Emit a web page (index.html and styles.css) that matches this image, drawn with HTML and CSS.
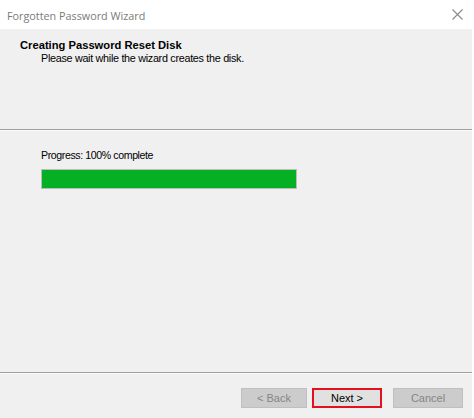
FILE: index.html
```html
<!DOCTYPE html>
<html>
<head>
<meta charset="utf-8">
<link rel="stylesheet" href="styles.css">
</head>
<body>
<div class="window">
  <div class="titlebar">
    <span class="title">Forgotten Password Wizard</span>
    <svg class="close" width="11" height="11" viewBox="0 0 11 11"><path d="M0.5 0.5 L10.5 10.5 M10.5 0.5 L0.5 10.5" stroke="#8a8a8a" stroke-width="1.1" fill="none"/></svg>
  </div>
  <div class="body">
    <div class="header">
      <div class="heading">Creating Password Reset Disk</div>
      <div class="sub">Please wait while the wizard creates the disk.</div>
    </div>
    <div class="sep"></div>
    <div class="content">
      <div class="label">Progress: 100% complete</div>
      <div class="bar"><div class="fill" style="width:100%"></div></div>
    </div>
    <div class="sep"></div>
    <div class="footer">
      <button class="btn disabled back">&lt; Back</button>
      <button class="btn next">Next &gt;</button>
      <button class="btn disabled cancel">Cancel</button>
    </div>
  </div>
</div>
</body>
</html>
```
FILE: styles.css
```css
html, body {
  margin: 0;
  padding: 0;
  background: #ffffff;
}
.window {
  width: 474px;
  height: 418px;
  display: flex;
  flex-direction: column;
  background: #ffffff;
}
.titlebar {
  height: 29px;
  display: flex;
  align-items: center;
  justify-content: space-between;
  padding: 0 11px 0 7px;
  box-sizing: border-box;
}
.title {
  font-family: "Open Sans", "Noto Sans", sans-serif;
  font-size: 10.8px;
  color: #7a7a7a;
  margin-top: 1px;
}
.close {
  display: block;
  margin-top: -1px;
}
.body {
  width: 472px;
  flex: 1;
  background: #f0f0f0;
  display: flex;
  flex-direction: column;
  font-family: "Liberation Sans", Arial, sans-serif;
  font-size: 11px;
  color: #000;
}
.header {
  height: 100px;
  padding: 10px 0 0 20px;
  box-sizing: border-box;
}
.heading {
  font-weight: bold;
  font-size: 11.2px;
  letter-spacing: 0;
  line-height: 13px;
}
.sub {
  padding-left: 21px;
  line-height: 13px;
  font-size: 10.8px;
  letter-spacing: -0.3px;
}
.sep {
  height: 1px;
  background: #a0a0a0;
  border-bottom: 1px solid #fbfbfb;
}
.content {
  height: 241px;
  padding: 18px 0 0 41px;
  box-sizing: border-box;
}
.label {
  line-height: 13px;
  font-size: 10.6px;
  letter-spacing: -0.4px;
}
.bar {
  margin-top: 7px;
  width: 256px;
  height: 20px;
  box-sizing: border-box;
  border: 1px solid #bcbcbc;
  background: #e6e6e6;
}
.fill {
  height: 100%;
  background: #06b025;
}
.footer {
  flex: 1;
  display: flex;
  padding: 14px 0 0 241px;
  box-sizing: border-box;
}
.btn {
  height: 20px;
  box-sizing: border-box;
  font-family: "Liberation Sans", Arial, sans-serif;
  font-size: 11px;
  padding: 0;
  margin: 0;
}
.disabled {
  background: #cccccc;
  border: 1px solid #bfbfbf;
  color: #858585;
}
.back {
  width: 66px;
}
.next {
  width: 70px;
  margin-left: 5px;
  background: #e1e1e1;
  border: 2px solid #e3101e;
  color: #000;
}
.cancel {
  width: 70px;
  margin-left: 11px;
}
```
